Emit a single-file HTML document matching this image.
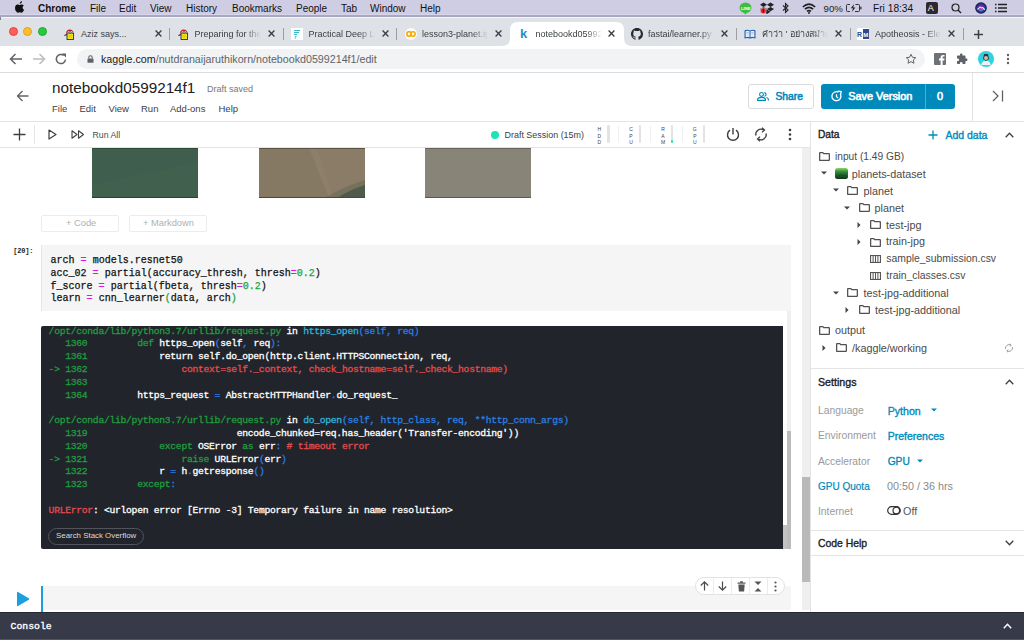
<!DOCTYPE html>
<html><head><meta charset="utf-8">
<style>
*{margin:0;padding:0;box-sizing:border-box}
html,body{width:1024px;height:640px;overflow:hidden;background:#fff;font-family:"Liberation Sans",sans-serif;color:#202124}
.a{position:absolute}
.t{position:absolute;white-space:nowrap;line-height:1}
svg{position:absolute;overflow:visible}
.mono{font-family:"Liberation Mono",monospace}
</style></head><body>

<!-- macOS menu bar -->
<div class="a" style="left:0;top:0;width:1024px;height:17px;background:#cecde4"></div>
<div class="a" style="left:0;top:14px;width:1024px;height:1px;background:#d6d5ea"></div>
<div class="a" style="left:0;top:15px;width:1024px;height:1.6px;background:#a9a8c2"></div>
<div class="t" style="left:38px;top:3.5px;font-size:10px;font-weight:bold;color:#111">Chrome</div>
<div class="t" style="left:90px;top:3.5px;font-size:10px;color:#111">File</div>
<div class="t" style="left:119px;top:3.5px;font-size:10px;color:#111">Edit</div>
<div class="t" style="left:150px;top:3.5px;font-size:10px;color:#111">View</div>
<div class="t" style="left:186px;top:3.5px;font-size:10px;color:#111">History</div>
<div class="t" style="left:232px;top:3.5px;font-size:10px;color:#111">Bookmarks</div>
<div class="t" style="left:296px;top:3.5px;font-size:10px;color:#111">People</div>
<div class="t" style="left:341px;top:3.5px;font-size:10px;color:#111">Tab</div>
<div class="t" style="left:370px;top:3.5px;font-size:10px;color:#111">Window</div>
<div class="t" style="left:420px;top:3.5px;font-size:10px;color:#111">Help</div>

<!-- tab strip -->
<div class="a" style="left:0;top:17px;width:1024px;height:29px;background:#dee1e6"></div>


<!-- window top corner highlight -->
<div class="a" style="left:1px;top:16.6px;width:1023px;height:1.4px;background:#f4f5f7;border-radius:4px 0 0 0"></div>
<div class="a" style="left:0;top:16.5px;width:1px;height:3px;background:#888"></div>
<!-- traffic lights -->
<div class="a" style="left:9px;top:27px;width:9px;height:9px;border-radius:50%;background:#fe5f57;border:0.5px solid #e14640"></div>
<div class="a" style="left:23px;top:27px;width:9px;height:9px;border-radius:50%;background:#febc2e;border:0.5px solid #dea123"></div>
<div class="a" style="left:37.5px;top:27px;width:9px;height:9px;border-radius:50%;background:#28c840;border:0.5px solid #1aab29"></div>

<!-- active tab -->
<svg style="left:502px;top:22px" width="132" height="24" viewBox="0 0 132 24"><path d="M0 24 Q8 24 8 16 L8 8 Q8 0 16 0 L114 0 Q122 0 122 8 L122 16 Q122 24 130 24 Z" fill="#fff"/></svg>

<!-- separators -->
<div class="a" style="left:169px;top:28px;width:1px;height:12px;background:#9aa0a6"></div>
<div class="a" style="left:283px;top:28px;width:1px;height:12px;background:#9aa0a6"></div>
<div class="a" style="left:396px;top:28px;width:1px;height:12px;background:#9aa0a6"></div>
<div class="a" style="left:736px;top:28px;width:1px;height:12px;background:#9aa0a6"></div>
<div class="a" style="left:850px;top:28px;width:1px;height:12px;background:#9aa0a6"></div>
<div class="a" style="left:963px;top:28px;width:1px;height:12px;background:#9aa0a6"></div>

<!-- tab 1 favicon (character) -->
<svg style="left:64px;top:28.5px" width="11" height="11" viewBox="0 0 11 11"><rect x="3" y="4.5" width="6.5" height="6" fill="#f2e51c" stroke="#233" stroke-width="0.9"/><rect x="4.5" y="6" width="3.5" height="3" fill="#e8d010"/><path d="M2 4.2 Q2.5 0.6 5.5 0.5 Q9 0.4 9.8 4.2 Z" fill="#c8202a"/><circle cx="4.7" cy="3.4" r="1.3" fill="#fff" stroke="#222" stroke-width="0.4"/><circle cx="7.4" cy="3.4" r="1.3" fill="#fff" stroke="#222" stroke-width="0.4"/><circle cx="4.9" cy="3.5" r="0.5" fill="#111"/><circle cx="7.2" cy="3.5" r="0.5" fill="#111"/><path d="M0.4 6.5 L3 5.6" stroke="#223" stroke-width="1.1"/></svg>
<div class="t" style="left:81px;top:30.4px;font-size:9px;color:#3c4043">Aziz says...</div>
<svg style="left:154.9px;top:30.3px" width="7" height="7" viewBox="0 0 7 7"><path d="M0.6 0.6 L6.4 6.4 M6.4 0.6 L0.6 6.4" stroke="#3c4043" stroke-width="1.35"/></svg>

<svg style="left:178px;top:28.5px" width="11" height="11" viewBox="0 0 11 11"><rect x="3" y="4.5" width="6.5" height="6" fill="#f2e51c" stroke="#233" stroke-width="0.9"/><rect x="4.5" y="6" width="3.5" height="3" fill="#e8d010"/><path d="M2 4.2 Q2.5 0.6 5.5 0.5 Q9 0.4 9.8 4.2 Z" fill="#c8202a"/><circle cx="4.7" cy="3.4" r="1.3" fill="#fff" stroke="#222" stroke-width="0.4"/><circle cx="7.4" cy="3.4" r="1.3" fill="#fff" stroke="#222" stroke-width="0.4"/><circle cx="4.9" cy="3.5" r="0.5" fill="#111"/><circle cx="7.2" cy="3.5" r="0.5" fill="#111"/><path d="M0.4 6.5 L3 5.6" stroke="#223" stroke-width="1.1"/></svg>
<div class="t" style="left:194.5px;top:30.4px;font-size:9px;color:#3c4043;width:66px;overflow:hidden;-webkit-mask-image:linear-gradient(90deg,#000 75%,transparent)">Preparing for the</div>
<svg style="left:268.4px;top:30.3px" width="7" height="7" viewBox="0 0 7 7"><path d="M0.6 0.6 L6.4 6.4 M6.4 0.6 L0.6 6.4" stroke="#3c4043" stroke-width="1.35"/></svg>

<svg style="left:291px;top:28px" width="12" height="12" viewBox="0 0 12 12"><rect x="0" y="0" width="12" height="12" fill="#fff"/><path d="M3 2.5 H9 M3 4.5 H8 M3 6.5 H6 M4 8.5 H5.5 M3.5 10 H5" stroke="#38b7c9" stroke-width="1.1"/></svg>
<div class="t" style="left:308.5px;top:30.4px;font-size:9px;color:#3c4043;width:66px;overflow:hidden;-webkit-mask-image:linear-gradient(90deg,#000 75%,transparent)">Practical Deep Le</div>
<svg style="left:381.9px;top:30.3px" width="7" height="7" viewBox="0 0 7 7"><path d="M0.6 0.6 L6.4 6.4 M6.4 0.6 L0.6 6.4" stroke="#3c4043" stroke-width="1.35"/></svg>

<svg style="left:405px;top:28px" width="12" height="12" viewBox="0 0 12 12"><circle cx="6" cy="6" r="6" fill="#fdfaf4"/><circle cx="4" cy="6" r="2.2" fill="none" stroke="#f6a000" stroke-width="1.5"/><circle cx="8" cy="6" r="2.2" fill="none" stroke="#f9ab00" stroke-width="1.5"/></svg>
<div class="t" style="left:422px;top:30.4px;font-size:9px;color:#3c4043;width:66px;overflow:hidden;-webkit-mask-image:linear-gradient(90deg,#000 75%,transparent)">lesson3-planet.ipynb</div>
<svg style="left:495.4px;top:30.3px" width="7" height="7" viewBox="0 0 7 7"><path d="M0.6 0.6 L6.4 6.4 M6.4 0.6 L0.6 6.4" stroke="#3c4043" stroke-width="1.35"/></svg>

<div class="t" style="left:520px;top:27px;font-size:13px;font-weight:bold;color:#1b8fd0">k</div>
<div class="t" style="left:535.5px;top:30.4px;font-size:9px;color:#3c4043;width:66px;overflow:hidden;-webkit-mask-image:linear-gradient(90deg,#000 75%,transparent)">notebookd0599214f1</div>
<svg style="left:608.4px;top:30.3px" width="7" height="7" viewBox="0 0 7 7"><path d="M0.6 0.6 L6.4 6.4 M6.4 0.6 L0.6 6.4" stroke="#3c4043" stroke-width="1.35"/></svg>

<svg style="left:631px;top:28px" width="12" height="12" viewBox="0 0 16 16"><path fill="#24292e" d="M8 0C3.58 0 0 3.58 0 8c0 3.54 2.29 6.53 5.47 7.59.4.07.55-.17.55-.38 0-.19-.01-.82-.01-1.49-2.01.37-2.53-.49-2.69-.94-.09-.23-.48-.94-.82-1.13-.28-.15-.68-.52-.01-.53.63-.01 1.08.58 1.23.82.72 1.21 1.87.87 2.33.66.07-.52.28-.87.51-1.07-1.78-.2-3.640-.89-3.64-3.95 0-.87.31-1.59.82-2.15-.08-.2-.36-1.02.08-2.12 0 0 .67-.21 2.2.82.64-.18 1.32-.27 2-.27.68 0 1.36.09 2 .27 1.53-1.04 2.2-.82 2.2-.82.44 1.1.16 1.92.08 2.12.51.56.82 1.27.82 2.15 0 3.07-1.87 3.75-3.65 3.95.29.25.54.73.54 1.48 0 1.07-.01 1.93-.01 2.2 0 .21.15.46.55.38A8.013 8.013 0 0016 8c0-4.42-3.58-8-8-8z"/></svg>
<div class="t" style="left:648px;top:30.4px;font-size:9px;color:#3c4043;width:66px;overflow:hidden;-webkit-mask-image:linear-gradient(90deg,#000 80%,transparent)">fastai/learner.py</div>
<svg style="left:721.4px;top:30.3px" width="7" height="7" viewBox="0 0 7 7"><path d="M0.6 0.6 L6.4 6.4 M6.4 0.6 L0.6 6.4" stroke="#3c4043" stroke-width="1.35"/></svg>

<svg style="left:744px;top:29px" width="12" height="10" viewBox="0 0 12 10"><path d="M0.5 1.5 Q3 0 6 1.5 Q9 0 11.5 1.5 V9.5 Q9 8.5 6 9.5 Q3 8.5 0.5 9.5 Z" fill="#1f5fb0"/><path d="M1.6 2.2 Q3.6 1.3 5.5 2.3 V8.2 Q3.6 7.5 1.6 8.2 Z M6.5 2.3 Q8.4 1.3 10.4 2.2 V8.2 Q8.4 7.5 6.5 8.2 Z" fill="#e8f0fa"/><path d="M2.3 3.5 H4.8 M2.3 5 H4.8 M7.2 3.5 H9.7 M7.2 5 H9.7" stroke="#7aa0d0" stroke-width="0.5"/></svg>
<div class="t" style="left:762px;top:30.4px;font-size:9px;color:#3c4043;width:66px;overflow:hidden;-webkit-mask-image:linear-gradient(90deg,#000 75%,transparent)">คำว่า ' อย่างสม่ำเสมอ</div>
<svg style="left:834.9px;top:30.3px" width="7" height="7" viewBox="0 0 7 7"><path d="M0.6 0.6 L6.4 6.4 M6.4 0.6 L0.6 6.4" stroke="#3c4043" stroke-width="1.35"/></svg>

<svg style="left:857px;top:28px" width="12" height="12" viewBox="0 0 12 12"><rect x="0" y="0" width="12" height="12" fill="#fff"/><rect x="6" y="1" width="6" height="10" fill="#2b4c8c"/><text x="0" y="9" font-size="7" font-weight="bold" fill="#2b4c8c" font-family="Liberation Sans">R</text><text x="6.3" y="9" font-size="6" font-weight="bold" fill="#fff" font-family="Liberation Sans">M</text></svg>
<div class="t" style="left:875px;top:30.4px;font-size:9px;color:#3c4043;width:66px;overflow:hidden;-webkit-mask-image:linear-gradient(90deg,#000 75%,transparent)">Apotheosis - Electric</div>
<svg style="left:947.9px;top:30.3px" width="7" height="7" viewBox="0 0 7 7"><path d="M0.6 0.6 L6.4 6.4 M6.4 0.6 L0.6 6.4" stroke="#3c4043" stroke-width="1.35"/></svg>
<svg style="left:974px;top:30px" width="9" height="9" viewBox="0 0 9 9"><path d="M4.5 0 V9 M0 4.5 H9" stroke="#3c4043" stroke-width="1.5"/></svg>

<!-- menubar right -->
<svg style="left:738.5px;top:2px" width="13" height="13" viewBox="0 0 13 13"><ellipse cx="6.5" cy="5.8" rx="6" ry="5.2" fill="#3bbf3e"/><path d="M5 10 L6 12.8 L8.5 10.5Z" fill="#3bbf3e"/><text x="2" y="7.6" font-size="4.2" font-weight="bold" fill="#fff" font-family="Liberation Sans">LINE</text></svg>
<svg style="left:759.5px;top:2px" width="14" height="12" viewBox="0 0 14 12"><path d="M3.5 0.5 L7 2.7 L3.5 4.9 L0 2.7Z M10.5 0.5 L14 2.7 L10.5 4.9 L7 2.7Z M3.5 4.9 L7 7.1 L3.5 9.3 L0 7.1Z M10.5 4.9 L14 7.1 L10.5 9.3 L7 7.1Z M7 7.6 L10.5 9.8 L7 12 L3.5 9.8Z" fill="#222"/><circle cx="3.3" cy="8.8" r="3" fill="#e8202a" stroke="#cecde4" stroke-width="0.6"/><rect x="2.8" y="6.8" width="1" height="3.6" fill="#3a0a0a"/></svg>
<svg style="left:782px;top:2px" width="8" height="12" viewBox="0 0 8 12"><path d="M1 3.5 L6 8 L3.5 10.5 V1.5 L6 4 L1 8.5" fill="none" stroke="#222" stroke-width="1.1"/></svg>
<svg style="left:801.5px;top:2.5px" width="14" height="11" viewBox="0 0 14 11"><path d="M0.8 4 Q7 -1.8 13.2 4" fill="none" stroke="#222" stroke-width="1.7"/><path d="M2.9 6.2 Q7 2.6 11.1 6.2" fill="none" stroke="#222" stroke-width="1.7"/><path d="M5 8.4 Q7 6.8 9 8.4" fill="none" stroke="#222" stroke-width="1.7"/><circle cx="7" cy="10" r="1" fill="#222"/></svg>
<div class="t" style="left:823.5px;top:4px;font-size:9.7px;color:#222">90%</div>
<svg style="left:845.5px;top:4px" width="16" height="8" viewBox="0 0 16 8"><path d="M4 0.5 H1.5 Q0.5 0.5 0.5 1.5 V6.5 Q0.5 7.5 1.5 7.5 H4 M9.5 0.5 H12.5 Q13.5 0.5 13.5 1.5 V6.5 Q13.5 7.5 12.5 7.5 H9" fill="none" stroke="#222" stroke-width="0.9"/><rect x="14.3" y="2.7" width="1.2" height="2.6" fill="#222"/><path d="M8.2 0 L4.8 4.3 H7 L5.8 8 L9.4 3.6 H7.2 Z" fill="#222"/></svg>
<div class="t" style="left:873px;top:3.5px;font-size:10.2px;color:#111">Fri 18:34</div>
<div class="a" style="left:925.5px;top:2px;width:12px;height:12px;border-radius:2px;background:#2a2a30"></div>
<div class="t" style="left:927.8px;top:3.5px;font-size:9px;color:#fff">A</div>
<svg style="left:951px;top:3px" width="11" height="11" viewBox="0 0 11 11"><circle cx="4.5" cy="4.5" r="3.5" fill="none" stroke="#222" stroke-width="1.2"/><path d="M7 7 L10 10" stroke="#222" stroke-width="1.4"/></svg>
<svg style="left:974.5px;top:2px" width="12" height="12" viewBox="0 0 12 12"><defs><radialGradient id="sg" cx="0.5" cy="0.5" r="0.5"><stop offset="0.3" stop-color="#5a3ad0"/><stop offset="0.8" stop-color="#2a2a70"/><stop offset="1" stop-color="#111130"/></radialGradient></defs><circle cx="6" cy="6" r="5.8" fill="url(#sg)"/><path d="M2 7.5 Q4 2.5 6 5.5 Q8 2.5 10 7.5" fill="#e040a0" opacity="0.8"/><path d="M3 7.5 Q5 3.5 6.5 6 Q8 4 9.5 8" fill="none" stroke="#fff" stroke-width="1"/><path d="M2 6 Q4 8 6 9 Q8 8 10 6" fill="none" stroke="#30c0f0" stroke-width="0.8"/></svg>
<svg style="left:995px;top:3px" width="12" height="10" viewBox="0 0 12 10"><path d="M0 1.5 H1.5 M3 1.5 H12 M0 5 H1.5 M3 5 H12 M0 8.5 H1.5 M3 8.5 H12" stroke="#222" stroke-width="1.3"/></svg>
<!-- apple -->
<svg style="left:14.5px;top:1px" width="10" height="12" viewBox="0 0 170 200"><path fill="#111" d="M150.4 155.6c-2.8 6.4-6.1 12.3-9.9 17.8-5.2 7.4-9.5 12.6-12.7 15.4-5.1 4.7-10.5 7.1-16.4 7.2-4.2 0-9.3-1.2-15.2-3.6-5.9-2.4-11.4-3.6-16.4-3.6-5.2 0-10.8 1.2-16.8 3.6-6 2.4-10.8 3.7-14.5 3.8-5.6.2-11.2-2.2-16.8-7.4-3.6-3.1-8-8.5-13.4-16.1-5.7-8-10.4-17.3-14.1-27.9C3.3 133.3 1.3 122.3 1.3 111.6c0-12.2 2.6-22.7 7.9-31.5 4.1-7.1 9.6-12.6 16.5-16.7 6.9-4.1 14.3-6.2 22.3-6.3 4.4 0 10.1 1.4 17.3 4 7.1 2.7 11.7 4 13.7 4 1.5 0 6.6-1.6 15.2-4.7 8.2-2.9 15.1-4.1 20.8-3.7 15.4 1.2 26.9 7.3 34.6 18.2-13.8 8.3-20.6 20-20.5 35 .1 11.7 4.4 21.4 12.7 29.1 3.8 3.6 8 6.3 12.7 8.3-1 3-2.1 5.8-3.2 8.5zM119 4.6c0 9.1-3.3 17.6-10 25.5-8 9.4-17.8 14.8-28.3 13.9-.1-1.1-.2-2.2-.2-3.4 0-8.8 3.8-18.1 10.6-25.8 3.4-3.9 7.7-7.1 12.9-9.7 5.2-2.5 10.1-3.9 14.7-4.2.2 1.2.3 2.4.3 3.7z"/></svg>

<!-- browser toolbar -->
<div class="a" style="left:0;top:46px;width:1024px;height:26px;background:#fff"></div>
<div class="a" style="left:0;top:72px;width:1024px;height:1px;background:#dadce0"></div>
<div class="a" style="left:77px;top:49px;width:848px;height:20px;border-radius:10px;background:#f1f3f4"></div>


<svg style="left:9px;top:53px" width="14" height="12" viewBox="0 0 14 12"><path d="M13 6 H1.5 M6.5 1 L1.5 6 L6.5 11" fill="none" stroke="#5f6368" stroke-width="1.5"/></svg>
<svg style="left:32px;top:53px" width="14" height="12" viewBox="0 0 14 12"><path d="M1 6 H12.5 M7.5 1 L12.5 6 L7.5 11" fill="none" stroke="#b9bcc0" stroke-width="1.5"/></svg>
<svg style="left:55px;top:53px" width="12" height="12" viewBox="0 0 12 12"><path d="M10.5 6.5 A4.6 4.6 0 1 1 8.8 2.4" fill="none" stroke="#5f6368" stroke-width="1.5"/><path d="M7 0.5 H11 V4.5 Z" fill="#5f6368"/></svg>
<svg style="left:86.5px;top:54.8px" width="7" height="8" viewBox="0 0 7 8"><path d="M1.8 3.5 V2.4 A1.7 1.7 0 0 1 5.2 2.4 V3.5" fill="none" stroke="#5f6368" stroke-width="1.1"/><rect x="0.5" y="3.4" width="6" height="4.4" rx="0.6" fill="#5f6368"/></svg>
<div class="t" style="left:101px;top:53.7px;font-size:10.7px;color:#202124">kaggle.com<span style="color:#5f6368">/nutdranaijaruthikorn/notebookd0599214f1/edit</span></div>
<svg style="left:905px;top:53px" width="12" height="12" viewBox="0 0 24 24"><path d="M12 2.5 L14.9 8.6 L21.5 9.4 L16.6 13.9 L17.9 20.5 L12 17.2 L6.1 20.5 L7.4 13.9 L2.5 9.4 L9.1 8.6 Z" fill="none" stroke="#5f6368" stroke-width="2"/></svg>
<svg style="left:934px;top:53px" width="12" height="12" viewBox="0 0 12 12"><rect x="0" y="0" width="12" height="12" rx="1" fill="#6e7276"/><path d="M8.6 12 V7.4 H10.2 L10.5 5.6 H8.6 V4.5 C8.6 4 8.8 3.6 9.5 3.6 H10.5 V2 C10.3 2 9.7 1.9 9 1.9 C7.5 1.9 6.6 2.8 6.6 4.4 V5.6 H5 V7.4 H6.6 V12 Z" fill="#fff"/></svg>
<svg style="left:956px;top:53px" width="12" height="12" viewBox="0 0 24 24"><path fill="#5f6368" d="M20.5 11H19V7c0-1.1-.9-2-2-2h-4V3.5C13 2.12 11.88 1 10.5 1S8 2.12 8 3.5V5H4c-1.1 0-1.99.9-1.99 2v3.8H3.5c1.49 0 2.7 1.21 2.7 2.7s-1.21 2.7-2.7 2.7H2V20c0 1.1.9 2 2 2h3.8v-1.5c0-1.49 1.21-2.7 2.7-2.7 1.49 0 2.7 1.21 2.7 2.7V22H17c1.1 0 2-.9 2-2v-4h1.5c1.38 0 2.5-1.12 2.5-2.5S21.88 11 20.5 11z"/></svg>
<svg style="left:977.5px;top:51px" width="16" height="16" viewBox="0 0 16 16"><circle cx="8" cy="8" r="8" fill="#2ad4e0"/><path d="M3 14 Q5 9 8 10 Q11 9 13 14 Z" fill="#f0f0f0"/><path d="M6 3 L10 3 L11 8 L8 10 L5 8 Z" fill="#334"/><circle cx="8" cy="7" r="2" fill="#d9b8a0"/></svg>
<svg style="left:1006px;top:53px" width="4" height="12" viewBox="0 0 4 12"><circle cx="2" cy="2" r="1.2" fill="#5f6368"/><circle cx="2" cy="6" r="1.2" fill="#5f6368"/><circle cx="2" cy="10" r="1.2" fill="#5f6368"/></svg>

<!-- kaggle header -->
<div class="t" style="left:52px;top:80px;font-size:15.25px;color:#202124">notebookd0599214f1</div>
<div class="t" style="left:207px;top:85px;font-size:9px;color:#777">Draft saved</div>
<div class="a" style="left:0;top:121px;width:1024px;height:1px;background:#e4e4e4"></div>
<div class="a" style="left:0;top:147px;width:810px;height:1px;background:#e4e4e4"></div>


<svg style="left:16px;top:90px" width="13" height="12" viewBox="0 0 13 12"><path d="M12.5 6 H1.5 M6.5 1 L1.5 6 L6.5 11" fill="none" stroke="#5f6368" stroke-width="1.3"/></svg>
<div class="t" style="left:52px;top:104px;font-size:9.5px;color:#3c4043">File</div>
<div class="t" style="left:79.5px;top:104px;font-size:9.5px;color:#3c4043">Edit</div>
<div class="t" style="left:108.5px;top:104px;font-size:9.5px;color:#3c4043">View</div>
<div class="t" style="left:141px;top:104px;font-size:9.5px;color:#3c4043">Run</div>
<div class="t" style="left:170px;top:104px;font-size:9.5px;color:#3c4043">Add-ons</div>
<div class="t" style="left:218.5px;top:104px;font-size:9.5px;color:#3c4043">Help</div>

<!-- share -->
<div class="a" style="left:748px;top:84px;width:66px;height:25px;border:1px solid #dadce0;border-radius:3px;background:#fff"></div>
<svg style="left:757px;top:92px" width="12" height="9" viewBox="0 0 12 9"><circle cx="4.5" cy="2.4" r="1.9" fill="none" stroke="#008abc" stroke-width="1.15"/><path d="M0.6 8.4 V7.4 Q0.6 5.3 4.5 5.3 Q8.4 5.3 8.4 7.4 V8.4 Z" fill="none" stroke="#008abc" stroke-width="1.15" stroke-linejoin="round"/><path d="M7.3 0.6 Q9.2 0.9 9.1 2.5 Q9 4 7.4 4.2 M9.4 5.5 Q11.4 6 11.4 7.6 V8.4" fill="none" stroke="#008abc" stroke-width="1.15"/></svg>
<div class="t" style="left:775.5px;top:91.6px;font-size:10.3px;color:#008abc;-webkit-text-stroke:0.55px">Share</div>
<!-- save version -->
<div class="a" style="left:821px;top:84px;width:134px;height:25px;border-radius:3px;background:#008abc"></div>
<div class="a" style="left:925px;top:84px;width:1px;height:25px;background:#4aaed2"></div>
<svg style="left:831px;top:91px" width="11" height="11" viewBox="0 0 11 11"><path d="M9.6 3.6 A4.5 4.5 0 1 1 7.4 1.2" fill="none" stroke="#fff" stroke-width="1.3"/><path d="M6.6 0.2 L10.2 0.6 L9.4 4" fill="none" stroke="#fff" stroke-width="1.3"/><path d="M5.5 3.2 V5.8 L7.2 7" fill="none" stroke="#fff" stroke-width="1.2"/></svg>
<div class="t" style="left:848.2px;top:90.8px;font-size:10.9px;color:#fff;-webkit-text-stroke:0.6px">Save Version</div>
<div class="t" style="left:937px;top:90.8px;font-size:10.9px;color:#fff;-webkit-text-stroke:0.6px">0</div>
<div class="a" style="left:972px;top:73px;width:1px;height:48px;background:#e4e4e4"></div>
<svg style="left:992px;top:90px" width="12" height="12" viewBox="0 0 12 12"><path d="M1 1 L6 6 L1 11" fill="none" stroke="#5f6368" stroke-width="1.3"/><path d="M10.5 0.5 V11.5" stroke="#5f6368" stroke-width="1.3"/></svg>

<!-- notebook toolbar -->
<svg style="left:13px;top:128px" width="13" height="13" viewBox="0 0 13 13"><path d="M6.5 0.5 V12.5 M0.5 6.5 H12.5" stroke="#3c4043" stroke-width="1.3"/></svg>
<div class="a" style="left:34px;top:125px;width:1px;height:19px;background:#e4e4e4"></div>
<svg style="left:48px;top:129px" width="9" height="11" viewBox="0 0 9 11"><path d="M1 1 L8 5.5 L1 10 Z" fill="none" stroke="#3c4043" stroke-width="1.2" stroke-linejoin="round"/></svg>
<svg style="left:71px;top:130px" width="14" height="9" viewBox="0 0 14 9"><path d="M1 0.8 L6 4.5 L1 8.2 Z M7.5 0.8 L12.5 4.5 L7.5 8.2 Z" fill="none" stroke="#3c4043" stroke-width="1.1" stroke-linejoin="round"/></svg>
<div class="t" style="left:92.5px;top:130.8px;font-size:8.75px;color:#4a4a4a">Run All</div>

<div class="a" style="left:490.5px;top:130.5px;width:8px;height:8px;border-radius:50%;background:#1ee3b4"></div>
<div class="t" style="left:504.5px;top:130.5px;font-size:8.95px;color:#3c4043">Draft Session (15m)</div>
<div class="t" style="left:596.2px;top:126.2px;font-size:5px;color:#444;width:6px;height:6px;line-height:6px;text-align:center">H</div>
<div class="t" style="left:596.2px;top:132.5px;font-size:5px;color:#444;width:6px;height:6px;line-height:6px;text-align:center">D</div>
<div class="t" style="left:596.2px;top:138.8px;font-size:5px;color:#444;width:6px;height:6px;line-height:6px;text-align:center">D</div>
<div class="a" style="left:607.0px;top:125px;width:2.6px;height:18px;background:#e3e3e3;border-radius:1.3px"></div>
<div class="a" style="left:618.3px;top:126px;width:1px;height:16px;background:#f0f0f0"></div>
<div class="t" style="left:628.0px;top:126.2px;font-size:5px;color:#444;width:6px;height:6px;line-height:6px;text-align:center">C</div>
<div class="t" style="left:628.0px;top:132.5px;font-size:5px;color:#444;width:6px;height:6px;line-height:6px;text-align:center">P</div>
<div class="t" style="left:628.0px;top:138.8px;font-size:5px;color:#444;width:6px;height:6px;line-height:6px;text-align:center">U</div>
<div class="a" style="left:638.8px;top:125px;width:2.6px;height:18px;background:#e3e3e3;border-radius:1.3px"></div>
<div class="a" style="left:649.8px;top:126px;width:1px;height:16px;background:#f0f0f0"></div>
<div class="t" style="left:660.0px;top:126.2px;font-size:5px;color:#444;width:6px;height:6px;line-height:6px;text-align:center">R</div>
<div class="t" style="left:660.0px;top:132.5px;font-size:5px;color:#444;width:6px;height:6px;line-height:6px;text-align:center">A</div>
<div class="t" style="left:660.0px;top:138.8px;font-size:5px;color:#444;width:6px;height:6px;line-height:6px;text-align:center">M</div>
<div class="a" style="left:670.8px;top:125px;width:2.6px;height:18px;background:#e3e3e3;border-radius:1.3px"></div>
<div class="a" style="left:670.8px;top:140px;width:2.6px;height:3px;background:#1ee3b4;border-radius:1.3px"></div>
<div class="a" style="left:681.8px;top:126px;width:1px;height:16px;background:#f0f0f0"></div>
<div class="t" style="left:691.8px;top:126.2px;font-size:5px;color:#444;width:6px;height:6px;line-height:6px;text-align:center">G</div>
<div class="t" style="left:691.8px;top:132.5px;font-size:5px;color:#444;width:6px;height:6px;line-height:6px;text-align:center">P</div>
<div class="t" style="left:691.8px;top:138.8px;font-size:5px;color:#444;width:6px;height:6px;line-height:6px;text-align:center">U</div>
<div class="a" style="left:702.8px;top:125px;width:2.6px;height:18px;background:#e3e3e3;border-radius:1.3px"></div>

<svg style="left:726px;top:127px" width="14" height="15" viewBox="0 0 14 15"><path d="M7 1 V7.5" stroke="#3c4043" stroke-width="1.4"/><path d="M4 3.2 A5.5 5.5 0 1 0 10 3.2" fill="none" stroke="#3c4043" stroke-width="1.4"/></svg>
<svg style="left:754px;top:127px" width="14" height="15" viewBox="0 0 14 15"><path d="M2 8.5 A5 5 0 0 1 9.5 3" fill="none" stroke="#3c4043" stroke-width="1.4"/><path d="M8 0.8 L10.5 3 L8 5.4" fill="none" stroke="#3c4043" stroke-width="1.3"/><path d="M12 6.5 A5 5 0 0 1 4.5 12" fill="none" stroke="#3c4043" stroke-width="1.4"/><path d="M6 9.6 L3.5 12 L6 14.2" fill="none" stroke="#3c4043" stroke-width="1.3"/></svg>
<svg style="left:788px;top:128px" width="4" height="13" viewBox="0 0 4 13"><circle cx="2" cy="2" r="1.3" fill="#3c4043"/><circle cx="2" cy="6.5" r="1.3" fill="#3c4043"/><circle cx="2" cy="11" r="1.3" fill="#3c4043"/></svg>


<!-- notebook content -->
<svg style="left:92px;top:148px" width="106" height="50" viewBox="0 0 106 50"><rect width="106" height="50" fill="#3f5e4d"/><path d="M0 38 Q40 28 106 14 V50 H0Z" fill="#43624f" opacity="0.7"/><rect x="0" y="0" width="106" height="1" fill="#2f4a3a"/><rect x="0" y="49" width="106" height="1" fill="#2a4033"/></svg>
<svg style="left:259px;top:148px" width="106" height="50" viewBox="0 0 106 50"><rect width="106" height="50" fill="#867963"/><path d="M50 0 H106 V50 H70 Z" fill="#8a7c66"/><path d="M50 0 H58 L74 50 H70 Z" fill="#908270" opacity="0.6"/><path d="M66 50 Q86 38 106 32 V50 Z" fill="#6d6b59" opacity="0.7"/><path d="M78 50 Q92 41 106 37 V50 Z" fill="#505a4a"/><rect x="0" y="0" width="106" height="1" fill="#5e5443"/><rect x="0" y="49" width="106" height="1" fill="#4e4638"/></svg>
<svg style="left:425px;top:148px" width="106" height="50" viewBox="0 0 106 50"><rect width="106" height="50" fill="#888578"/><rect x="0" y="0" width="106" height="1" fill="#66645a"/><rect x="0" y="49" width="106" height="1" fill="#5c5a4e"/></svg>

<div class="a" style="left:41px;top:215px;width:78px;height:17px;border:1px solid #ececec;border-radius:2px"></div>
<div class="t" style="left:66px;top:219px;font-size:9.3px;color:#b0b0b0">+ Code</div>
<div class="a" style="left:129px;top:215px;width:78px;height:17px;border:1px solid #ececec;border-radius:2px"></div>
<div class="t" style="left:143px;top:219px;font-size:9.3px;color:#b0b0b0">+ Markdown</div>

<div class="t mono" style="left:13.3px;top:247.5px;font-size:7px;letter-spacing:-0.2px;font-weight:bold;color:#222">[20]:</div>
<div class="a" style="left:41px;top:245px;width:750px;height:66px;background:#f5f5f5;border-left:1px solid #e6e6e6"></div>
<pre class="a mono" style="left:50.6px;top:255px;font-size:10px;line-height:12.8px;color:#111;-webkit-text-stroke-width:0.25px">arch <span style="color:#dd1add">=</span> models.resnet50
acc_02 <span style="color:#dd1add">=</span> partial(accuracy_thresh, thresh<span style="color:#dd1add">=</span><span style="color:#17a536">0.2</span>)
f_score <span style="color:#dd1add">=</span> partial(fbeta, thresh<span style="color:#dd1add">=</span><span style="color:#17a536">0.2</span>)
learn <span style="color:#dd1add">=</span> cnn_learner<span style="color:#17a536">(</span>data, arch<span style="color:#17a536">)</span></pre>

<!-- output scroll track -->
<div class="a" style="left:783px;top:311px;width:8px;height:238px;background:#efefef"></div>
<div class="a" style="left:783px;top:311px;width:4px;height:214px;background:#fff"></div>
<div class="a" style="left:787px;top:431px;width:4px;height:118px;background:#bbb"></div>
<div class="a" style="left:783px;top:525px;width:4px;height:24px;background:#c2c2c2"></div>

<!-- error output -->
<div class="a" style="left:41px;top:326px;width:742px;height:223px;background:#21242b;border-radius:2px 0 0 2px"></div>
<pre class="a mono" style="left:48.6px;top:325.6px;font-size:9.7px;letter-spacing:-0.28px;line-height:12.8px;color:#fff;-webkit-text-stroke:0.3px"><span style="color:#1f9d3e">/opt/conda/lib/python3.7/urllib/request.py</span> in <span style="color:#2fb4dc">https_open</span><span style="color:#2a7fe0">(self, req)</span>
<span style="color:#1f9d3e">   1360</span>         <span style="color:#1f9d3e">def</span> https_open<span style="color:#2a7fe0">(</span>self<span style="color:#2a7fe0">,</span> req<span style="color:#2a7fe0">):</span>
<span style="color:#1f9d3e">   1361</span>             return self.do_open(http.client.HTTPSConnection, req,
<span style="color:#1f9d3e">-&gt; 1362</span>                 <span style="color:#e24c4c">context=self._context, check_hostname=self._check_hostname)</span>
<span style="color:#1f9d3e">   1363</span>
<span style="color:#1f9d3e">   1364</span>         https_request <span style="color:#2a7fe0">=</span> AbstractHTTPHandler<span style="color:#2a7fe0">.</span>do_request_

<span style="color:#1f9d3e">/opt/conda/lib/python3.7/urllib/request.py</span> in <span style="color:#2fb4dc">do_open</span><span style="color:#2a7fe0">(self, http_class, req, **http_conn_args)</span>
<span style="color:#1f9d3e">   1319</span>                           encode_chunked=req.has_header('Transfer-encoding'))
<span style="color:#1f9d3e">   1320</span>             <span style="color:#1f9d3e">except</span> OSError <span style="color:#1f9d3e">as</span> err<span style="color:#2a7fe0">:</span> <span style="color:#e24c4c"># timeout error</span>
<span style="color:#1f9d3e">-&gt; 1321</span>                 <span style="color:#1f9d3e">raise</span> URLError<span style="color:#2a7fe0">(</span>err<span style="color:#2a7fe0">)</span>
<span style="color:#1f9d3e">   1322</span>             r <span style="color:#2a7fe0">=</span> h<span style="color:#2a7fe0">.</span>getresponse<span style="color:#2a7fe0">()</span>
<span style="color:#1f9d3e">   1323</span>         <span style="color:#1f9d3e">except</span><span style="color:#2a7fe0">:</span>

<span style="color:#e84a4f">URLError</span>: &lt;urlopen error [Errno -3] Temporary failure in name resolution&gt;</pre>
<div class="a" style="left:48px;top:528px;width:96px;height:17px;border:1px solid #50545e;border-radius:9px"></div>
<div class="t" style="left:56px;top:532px;font-size:7.9px;color:#dcdcdc">Search Stack Overflow</div>

<!-- bottom cell -->
<div class="a" style="left:43px;top:586px;width:748px;height:23.5px;background:#f5f5f5"></div>
<div class="a" style="left:41px;top:586px;width:2px;height:26px;background:#1a9fe0"></div>
<svg style="left:16.2px;top:591px" width="14" height="16" viewBox="0 0 14 16"><path d="M1 1.5 Q1 0.5 2 1 L12.8 7.3 Q13.5 8 12.8 8.7 L2 15 Q1 15.5 1 14.5 Z" fill="#1a9fe0"/></svg>
<div class="a" style="left:695px;top:577px;width:90px;height:18px;border:1px solid #e3e3e3;border-radius:9px;background:#fff"></div>
<div class="a" style="left:713px;top:578px;width:1px;height:16px;background:#ececec"></div>
<div class="a" style="left:731px;top:578px;width:1px;height:16px;background:#ececec"></div>
<div class="a" style="left:749px;top:578px;width:1px;height:16px;background:#ececec"></div>
<div class="a" style="left:767px;top:578px;width:1px;height:16px;background:#ececec"></div>
<svg style="left:700px;top:581px" width="9" height="10" viewBox="0 0 9 10"><path d="M4.5 9.5 V1 M0.8 4.5 L4.5 0.8 L8.2 4.5" fill="none" stroke="#4a4a4a" stroke-width="1.2"/></svg>
<svg style="left:718px;top:581px" width="9" height="10" viewBox="0 0 9 10"><path d="M4.5 0.5 V9 M0.8 5.5 L4.5 9.2 L8.2 5.5" fill="none" stroke="#4a4a4a" stroke-width="1.2"/></svg>
<svg style="left:736.5px;top:580.5px" width="9" height="11" viewBox="0 0 9 11"><rect x="0.5" y="1.5" width="8" height="1.2" fill="#555"/><rect x="3" y="0.3" width="3" height="1.5" fill="#555"/><path d="M1.3 3.5 H7.7 L7.1 10.5 H1.9 Z" fill="#555"/></svg>
<svg style="left:754px;top:580.5px" width="8" height="11" viewBox="0 0 8 11"><path d="M0.5 0.5 H7.5 L4 4 Z M4 7 L7.5 10.5 H0.5 Z" fill="#555"/></svg>
<svg style="left:774px;top:580.5px" width="3" height="11" viewBox="0 0 3 11"><circle cx="1.5" cy="1.5" r="1.1" fill="#555"/><circle cx="1.5" cy="5.5" r="1.1" fill="#555"/><circle cx="1.5" cy="9.5" r="1.1" fill="#555"/></svg>

<!-- main scrollbar -->
<div class="a" style="left:802px;top:148px;width:8px;height:461.5px;background:#efefef"></div>
<div class="a" style="left:802px;top:477px;width:8px;height:105px;background:#b9b9b9"></div>

<!-- sidebar -->
<div class="a" style="left:810px;top:121px;width:1px;height:491px;background:#e4e4e4"></div>


<!-- sidebar content -->
<div class="t" style="left:818px;top:130px;font-size:10.2px;color:#202124;-webkit-text-stroke:0.35px">Data</div>
<svg style="left:928px;top:130px" width="10" height="10" viewBox="0 0 10 10"><path d="M5 0.5 V9.5 M0.5 5 H9.5" stroke="#008abc" stroke-width="1.3"/></svg>
<div class="t" style="left:945.4px;top:130px;font-size:10.5px;color:#008abc;-webkit-text-stroke:0.35px">Add data</div>
<svg style="left:1004.8px;top:131.5px" width="9" height="6" viewBox="0 0 9 6"><path d="M0.7 5.2 L4.5 1.3 L8.3 5.2" fill="none" stroke="#3c4043" stroke-width="1.3"/></svg>
<svg style="left:818.7px;top:151.6px" width="11" height="9" viewBox="0 0 11 9"><path d="M0.65 8.35 V1.1 Q0.65 0.65 1.1 0.65 H3.9 L4.7 1.6 H9.9 Q10.35 1.6 10.35 2.05 V7.9 Q10.35 8.35 9.9 8.35 Z" fill="none" stroke="#505050" stroke-width="1.25" stroke-linejoin="round"/></svg>
<div class="t" style="left:835.0px;top:152.2px;font-size:10.2px;color:#4a4a4a;font-weight:normal">input (1.49 GB)</div>
<svg style="left:821.0px;top:171.0px" width="6" height="4" viewBox="0 0 6 4"><path d="M0 0.5 H6 L3 3.5 Z" fill="#444"/></svg>
<svg style="left:835px;top:167.5px" width="13" height="11" viewBox="0 0 13 11"><defs><linearGradient id="pg" x1="0" y1="0" x2="0" y2="1"><stop offset="0" stop-color="#8fd46a"/><stop offset="0.35" stop-color="#2f8a3a"/><stop offset="1" stop-color="#10301a"/></linearGradient></defs><rect x="0" y="0" width="13" height="11" rx="2.5" fill="url(#pg)"/><path d="M2 9 Q5 5 8 8 Q10 6 11 8" fill="none" stroke="#1b4a22" stroke-width="1"/></svg>
<div class="t" style="left:851.8px;top:168.9px;font-size:10.8px;color:#4a4a4a;font-weight:normal">planets-dataset</div>
<svg style="left:832.5px;top:188.0px" width="6" height="4" viewBox="0 0 6 4"><path d="M0 0.5 H6 L3 3.5 Z" fill="#444"/></svg>
<svg style="left:847.2px;top:185.6px" width="11" height="9" viewBox="0 0 11 9"><path d="M0.65 8.35 V1.1 Q0.65 0.65 1.1 0.65 H3.9 L4.7 1.6 H9.9 Q10.35 1.6 10.35 2.05 V7.9 Q10.35 8.35 9.9 8.35 Z" fill="none" stroke="#505050" stroke-width="1.25" stroke-linejoin="round"/></svg>
<div class="t" style="left:863.5px;top:185.9px;font-size:10.8px;color:#4a4a4a;font-weight:normal">planet</div>
<svg style="left:844.0px;top:205.5px" width="6" height="4" viewBox="0 0 6 4"><path d="M0 0.5 H6 L3 3.5 Z" fill="#444"/></svg>
<svg style="left:858.8px;top:203.1px" width="11" height="9" viewBox="0 0 11 9"><path d="M0.65 8.35 V1.1 Q0.65 0.65 1.1 0.65 H3.9 L4.7 1.6 H9.9 Q10.35 1.6 10.35 2.05 V7.9 Q10.35 8.35 9.9 8.35 Z" fill="none" stroke="#505050" stroke-width="1.25" stroke-linejoin="round"/></svg>
<div class="t" style="left:874.6px;top:203.4px;font-size:10.8px;color:#4a4a4a;font-weight:normal">planet</div>
<svg style="left:856.5px;top:221.5px" width="4" height="6" viewBox="0 0 4 6"><path d="M0.5 0 V6 L3.5 3 Z" fill="#444"/></svg>
<svg style="left:870.2px;top:220.1px" width="11" height="9" viewBox="0 0 11 9"><path d="M0.65 8.35 V1.1 Q0.65 0.65 1.1 0.65 H3.9 L4.7 1.6 H9.9 Q10.35 1.6 10.35 2.05 V7.9 Q10.35 8.35 9.9 8.35 Z" fill="none" stroke="#505050" stroke-width="1.25" stroke-linejoin="round"/></svg>
<div class="t" style="left:886.0px;top:219.5px;font-size:10.8px;color:#4a4a4a;font-weight:normal">test-jpg</div>
<svg style="left:856.5px;top:239.0px" width="4" height="6" viewBox="0 0 4 6"><path d="M0.5 0 V6 L3.5 3 Z" fill="#444"/></svg>
<svg style="left:870.2px;top:237.6px" width="11" height="9" viewBox="0 0 11 9"><path d="M0.65 8.35 V1.1 Q0.65 0.65 1.1 0.65 H3.9 L4.7 1.6 H9.9 Q10.35 1.6 10.35 2.05 V7.9 Q10.35 8.35 9.9 8.35 Z" fill="none" stroke="#505050" stroke-width="1.25" stroke-linejoin="round"/></svg>
<div class="t" style="left:886.0px;top:236.1px;font-size:10.8px;color:#4a4a4a;font-weight:normal">train-jpg</div>
<svg style="left:870.2px;top:255.4px" width="11" height="8" viewBox="0 0 11 8"><rect x="0.55" y="0.55" width="9.9" height="6.9" fill="none" stroke="#555" stroke-width="1.1"/><path d="M3.1 0.6 V7.4 M5.5 0.6 V7.4 M7.9 0.6 V7.4" stroke="#555" stroke-width="1"/></svg>
<div class="t" style="left:886.3px;top:254.2px;font-size:10.4px;color:#4a4a4a;font-weight:normal">sample_submission.csv</div>
<svg style="left:870.2px;top:272.4px" width="11" height="8" viewBox="0 0 11 8"><rect x="0.55" y="0.55" width="9.9" height="6.9" fill="none" stroke="#555" stroke-width="1.1"/><path d="M3.1 0.6 V7.4 M5.5 0.6 V7.4 M7.9 0.6 V7.4" stroke="#555" stroke-width="1"/></svg>
<div class="t" style="left:886.3px;top:271.2px;font-size:10.4px;color:#4a4a4a;font-weight:normal">train_classes.csv</div>
<svg style="left:832.5px;top:290.7px" width="6" height="4" viewBox="0 0 6 4"><path d="M0 0.5 H6 L3 3.5 Z" fill="#444"/></svg>
<svg style="left:847.2px;top:288.3px" width="11" height="9" viewBox="0 0 11 9"><path d="M0.65 8.35 V1.1 Q0.65 0.65 1.1 0.65 H3.9 L4.7 1.6 H9.9 Q10.35 1.6 10.35 2.05 V7.9 Q10.35 8.35 9.9 8.35 Z" fill="none" stroke="#505050" stroke-width="1.25" stroke-linejoin="round"/></svg>
<div class="t" style="left:863.5px;top:287.7px;font-size:10.8px;color:#4a4a4a;font-weight:normal">test-jpg-additional</div>
<svg style="left:845.0px;top:306.6px" width="4" height="6" viewBox="0 0 4 6"><path d="M0.5 0 V6 L3.5 3 Z" fill="#444"/></svg>
<svg style="left:858.7px;top:305.2px" width="11" height="9" viewBox="0 0 11 9"><path d="M0.65 8.35 V1.1 Q0.65 0.65 1.1 0.65 H3.9 L4.7 1.6 H9.9 Q10.35 1.6 10.35 2.05 V7.9 Q10.35 8.35 9.9 8.35 Z" fill="none" stroke="#505050" stroke-width="1.25" stroke-linejoin="round"/></svg>
<div class="t" style="left:875.0px;top:304.6px;font-size:10.8px;color:#4a4a4a;font-weight:normal">test-jpg-additional</div>
<svg style="left:818.7px;top:325.6px" width="11" height="9" viewBox="0 0 11 9"><path d="M0.65 8.35 V1.1 Q0.65 0.65 1.1 0.65 H3.9 L4.7 1.6 H9.9 Q10.35 1.6 10.35 2.05 V7.9 Q10.35 8.35 9.9 8.35 Z" fill="none" stroke="#505050" stroke-width="1.25" stroke-linejoin="round"/></svg>
<div class="t" style="left:835.0px;top:325.2px;font-size:10.8px;color:#4a4a4a;font-weight:normal">output</div>
<svg style="left:822.0px;top:344.7px" width="4" height="6" viewBox="0 0 4 6"><path d="M0.5 0 V6 L3.5 3 Z" fill="#444"/></svg>
<svg style="left:836.2px;top:343.3px" width="11" height="9" viewBox="0 0 11 9"><path d="M0.65 8.35 V1.1 Q0.65 0.65 1.1 0.65 H3.9 L4.7 1.6 H9.9 Q10.35 1.6 10.35 2.05 V7.9 Q10.35 8.35 9.9 8.35 Z" fill="none" stroke="#505050" stroke-width="1.25" stroke-linejoin="round"/></svg>
<div class="t" style="left:852.0px;top:342.7px;font-size:10.8px;color:#4a4a4a;font-weight:normal">/kaggle/working</div>
<svg style="left:1004px;top:343px" width="10" height="10" viewBox="0 0 10 10"><path d="M1.5 6 A3.8 3.8 0 0 1 7 2" fill="none" stroke="#9aa0a6" stroke-width="1"/><path d="M5.8 0.8 L7.3 2 L6 3.6" fill="none" stroke="#9aa0a6" stroke-width="1"/><path d="M8.5 4 A3.8 3.8 0 0 1 3 8" fill="none" stroke="#9aa0a6" stroke-width="1"/><path d="M4.2 6.4 L2.7 8 L4 9.2" fill="none" stroke="#9aa0a6" stroke-width="1"/></svg>
<div class="a" style="left:811px;top:368px;width:213px;height:1px;background:#e4e4e4"></div>
<div class="t" style="left:818px;top:377px;font-size:10.65px;color:#202124;-webkit-text-stroke:0.35px">Settings</div>
<svg style="left:1004.8px;top:378.5px" width="9" height="6" viewBox="0 0 9 6"><path d="M0.7 5.2 L4.5 1.3 L8.3 5.2" fill="none" stroke="#3c4043" stroke-width="1.3"/></svg>
<div class="t" style="left:818.0px;top:406.1px;font-size:10.3px;color:#9a9a9a;font-weight:normal">Language</div>
<div class="t" style="left:887.7px;top:405.8px;font-size:10.6px;color:#008abc;font-weight:normal;-webkit-text-stroke:0.35px">Python</div>
<svg style="left:930.5px;top:408px" width="6" height="4" viewBox="0 0 6 4"><path d="M0 0.5 H6 L3 3.5 Z" fill="#008abc"/></svg>
<div class="t" style="left:818.0px;top:431.4px;font-size:10.3px;color:#9a9a9a;font-weight:normal">Environment</div>
<div class="t" style="left:887.7px;top:430.8px;font-size:10.5px;color:#008abc;font-weight:normal;-webkit-text-stroke:0.35px">Preferences</div>
<div class="t" style="left:818.0px;top:456.8px;font-size:10.3px;color:#9a9a9a;font-weight:normal">Accelerator</div>
<div class="t" style="left:887.7px;top:456.8px;font-size:10.2px;color:#008abc;font-weight:normal;-webkit-text-stroke:0.35px">GPU</div>
<svg style="left:917px;top:459px" width="6" height="4" viewBox="0 0 6 4"><path d="M0 0.5 H6 L3 3.5 Z" fill="#008abc"/></svg>
<div class="t" style="left:818.0px;top:482.0px;font-size:10px;color:#008abc;font-weight:normal;-webkit-text-stroke:0.2px">GPU Quota</div>
<div class="t" style="left:886.9px;top:480.6px;font-size:10.8px;color:#8a8a8a;font-weight:normal">00:50 / 36 hrs</div>
<div class="t" style="left:818.0px;top:507.1px;font-size:10.3px;color:#9a9a9a;font-weight:normal">Internet</div>
<svg style="left:886.5px;top:505.5px" width="14" height="9" viewBox="0 0 14 9"><rect x="0.7" y="0.7" width="12.6" height="7.6" rx="3.8" fill="none" stroke="#333" stroke-width="1.2"/><circle cx="9.3" cy="4.5" r="3.3" fill="none" stroke="#333" stroke-width="1.2"/></svg>
<div class="t" style="left:903.0px;top:505.9px;font-size:10.8px;color:#555;font-weight:normal">Off</div>
<div class="a" style="left:811px;top:530px;width:213px;height:1px;background:#e4e4e4"></div>
<div class="t" style="left:818px;top:538.5px;font-size:10.4px;color:#202124;-webkit-text-stroke:0.35px">Code Help</div>
<svg style="left:1004.8px;top:540px" width="9" height="6" viewBox="0 0 9 6"><path d="M0.7 0.8 L4.5 4.7 L8.3 0.8" fill="none" stroke="#3c4043" stroke-width="1.3"/></svg>
<div class="a" style="left:811px;top:555px;width:213px;height:1px;background:#e4e4e4"></div>

<!-- console -->
<div class="a" style="left:0;top:612px;width:1024px;height:28px;background:#363a49"></div>
<svg style="left:1002.5px;top:622.5px" width="9" height="6" viewBox="0 0 9 6"><path d="M0.8 5.2 L4.5 1.3 L8.2 5.2" fill="none" stroke="#fff" stroke-width="1.5"/></svg>
<div class="a" style="left:0;top:612px;width:1024px;height:1px;background:#262932"></div>
<div class="a" style="left:0;top:638.8px;width:1024px;height:1.2px;background:#505565"></div>
<div class="t mono" style="left:10.5px;top:622px;font-size:9.8px;color:#fff;-webkit-text-stroke:0.35px #fff">Console</div>

</body></html>
